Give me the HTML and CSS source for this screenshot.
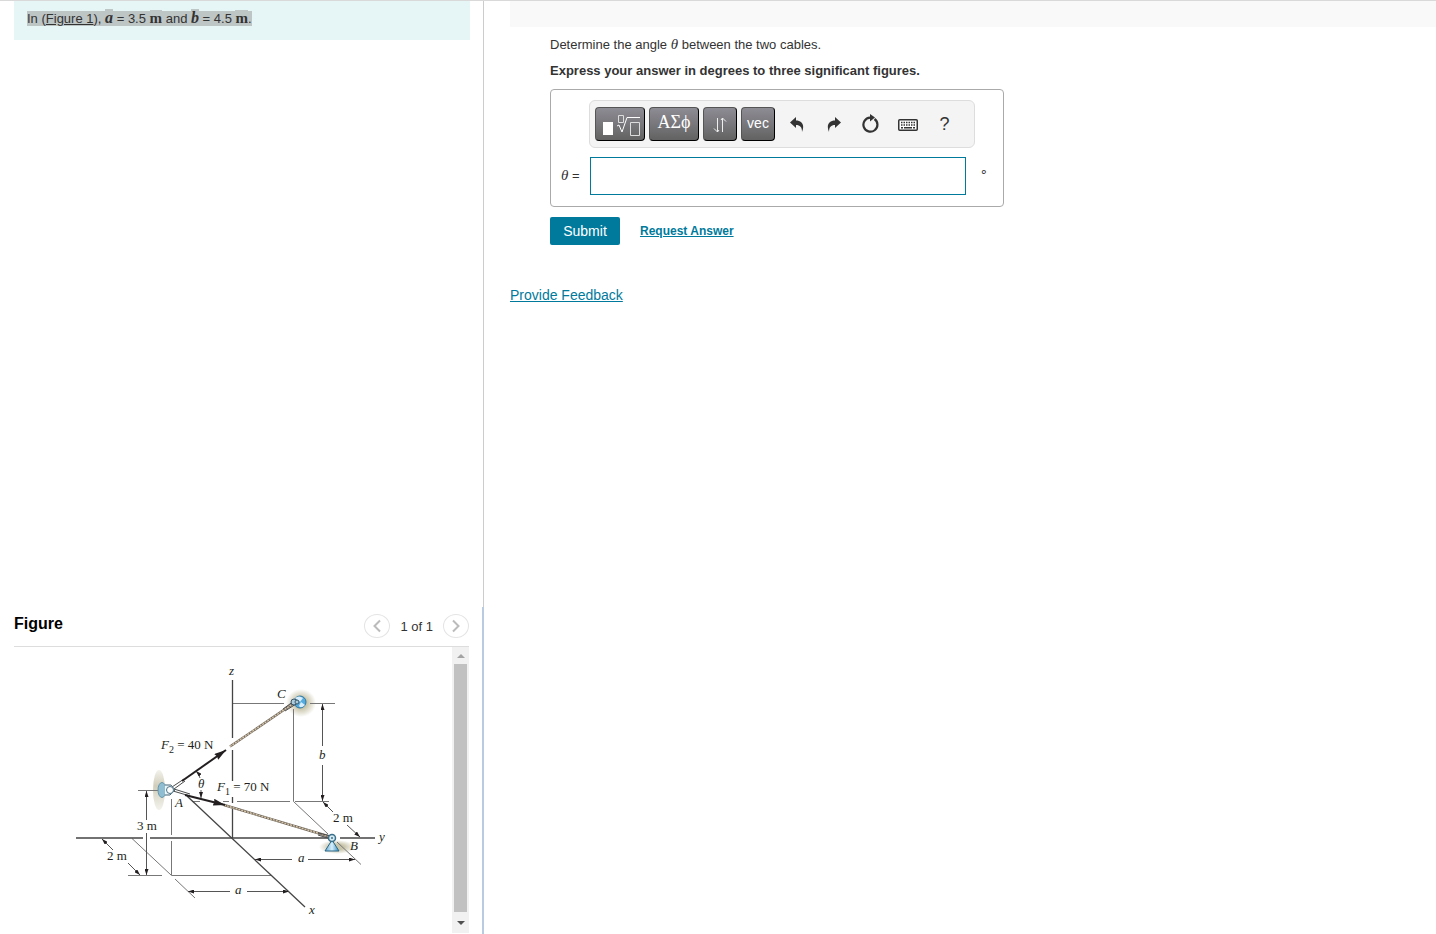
FILE: index.html
```html
<!DOCTYPE html>
<html lang="en">
<head>
  <meta charset="UTF-8" />
  <meta name="viewport" content="width=device-width, initial-scale=1" />
  <title>Angle between two cables</title>
  <link rel="stylesheet" href="styles.css">
</head>
<body>

<div class="page">
  <!-- Left side: problem text and figure -->
  <aside class="left">
    <div class="problem">
      <p><mark>In (<a href="#figure">Figure 1</a>), </mark><mark class="math"><i>a</i></mark><mark> = 3.5 </mark><mark class="math unit-m">m</mark><mark> and </mark><mark class="math"><i>b</i></mark><mark> = 4.5 </mark><mark class="math unit-m">m</mark><mark>.</mark></p>
    </div>

    <section class="figure" id="figure">
      <div class="figure-head">
        <h2>Figure</h2>
        <div class="pager">
          <button type="button" aria-label="Previous figure">
            <svg width="10" height="14" viewBox="0 0 10 14"><path d="M8 1.5L2.5 7L8 12.5" /></svg>
          </button>
          <span>1 of 1</span>
          <button type="button" aria-label="Next figure">
            <svg width="10" height="14" viewBox="0 0 10 14"><path d="M2 1.5L7.5 7L2 12.5" /></svg>
          </button>
        </div>
      </div>

      <div class="figure-body">
        <svg class="diagram" width="438" height="286" viewBox="14 647 438 286" role="img" aria-label="Two cables from A to B and C">
          <defs>
            <marker id="tip" viewBox="0 0 6 4" refX="6" refY="2" markerWidth="6" markerHeight="4" markerUnits="userSpaceOnUse" orient="auto">
              <path d="M0 0L6 2L0 4Z" fill="#231f20" />
            </marker>
            <marker id="force" viewBox="0 0 12 7" refX="12" refY="3.5" markerWidth="12" markerHeight="7" markerUnits="userSpaceOnUse" orient="auto">
              <path d="M0 0L12 3.5L0 7L1 3.5Z" fill="#231f20" />
            </marker>
            <radialGradient id="shade">
              <stop offset="0.4" stop-color="#c9c5ab" />
              <stop offset="1" stop-color="#c9c5ab" stop-opacity="0" />
            </radialGradient>
            <linearGradient id="wall" x2="0" y2="1">
              <stop offset="0" stop-color="#d6d3c0" stop-opacity="0.3" />
              <stop offset="0.4" stop-color="#d0cdb9" />
              <stop offset="1" stop-color="#d6d3c0" stop-opacity="0.3" />
            </linearGradient>
            <linearGradient id="cone">
              <stop offset="0" stop-color="#5fa9d3" />
              <stop offset="0.5" stop-color="#d9effa" />
              <stop offset="1" stop-color="#2b8cc4" />
            </linearGradient>
          </defs>

          <!-- shading behind the supports -->
          <ellipse cx="159" cy="790" rx="6" ry="20" fill="url(#wall)" />
          <ellipse cx="301" cy="703" rx="15" ry="14" fill="url(#shade)" />
          <ellipse cx="337" cy="847" rx="18" ry="7" fill="url(#shade)" />

          <!-- construction lines -->
          <g class="thin">
            <path d="M232.500 703.500H284M310 703.500H335" />
            <path d="M293.500 709V801.500L328 834M337 842L361 864.500" />
            <path d="M192 801.500H200M223 801.500H229M237 801.500H290M295 801.500H329" />
            <path d="M138 790.500H160M171.500 799V835M171.500 841V875.500H271M128 875.500H162" />
            <path d="M132 838.500L171 875M175 879L195 898" />
          </g>
          <g class="axis">
            <path d="M232.500 680V738M232.500 750V781M232.500 797V803M232.500 809V838" />
            <path d="M76 838H143M150 838H328M340 838H375" />
            <path d="M187 796L305 907" />
          </g>

          <!-- dimensions -->
          <g class="dim">
            <path d="M322.500 746V704" /><path d="M322.500 765V801" />
            <path d="M146.500 820V791" /><path d="M146.500 833V875" />
            <path d="M113 850L102 839" /><path d="M128 863L140 875" />
            <path d="M333 812L323 802" /><path d="M347 825L360 837" />
            <path d="M292 859.500H255" /><path d="M308 859.500H355" />
            <path d="M230 891.500H188" /><path d="M247 891.500H289" />
            <path d="M200 778Q199 774 196 771" /><path d="M201 790V798" />
          </g>

          <!-- cables -->
          <g class="rope">
            <path d="M230 746.500L294 703" />
            <path d="M224 805L331 837" />
          </g>
          <g class="twist">
            <path d="M230 746.500L294 703" />
            <path d="M224 805L331 837" />
          </g>
          <g class="loop">
            <path d="M283 709L294 701M285 711L296 704" />
            <path d="M172 787L184 779M174 789L185 781M173 791L190 796M174 789L190 794M318 833L331 836M318 835L331 839" />
          </g>
          <g class="arrow">
            <path d="M182 781L226 750" /><path d="M185 795L225 805" />
          </g>

          <!-- supports -->
          <ellipse cx="162" cy="790" rx="4" ry="7.500" fill="#8fbed3" stroke="#6597ac" />
          <path d="M165 785H171L175 790L170 795H165" fill="#eef6fa" stroke="#496675" />
          <circle cx="170" cy="790" r="3.500" fill="#fff" stroke="#4d7385" />
          <circle cx="300" cy="702" r="6" fill="#57acdf" stroke="#30779f" />
          <path d="M300 702L295 698Q299 695 303 698ZM301 702L305 705Q301 709 299 706Z" fill="#d8eefc" />
          <circle cx="294" cy="702" r="3" fill="#aacbdc" stroke="#385666" />
          <circle cx="297" cy="702" r="2" fill="#aacbdc" stroke="#385666" />
          <path d="M332 840L339 851H325Z" fill="url(#cone)" stroke="#2b6787" />
          <circle cx="332" cy="838" r="3.500" fill="#d5e9f1" stroke="#3a708b" stroke-width="1.500" />
          <circle cx="332" cy="838" r="1" fill="#3a708b" />

          <!-- labels -->
          <g class="label">
            <text x="229" y="675" class="it">z</text>
            <text x="277" y="698" class="it">C</text>
            <text x="319" y="759" class="it">b</text>
            <text x="161" y="749"><tspan class="it">F</tspan><tspan class="sub" dy="4">2</tspan><tspan dy="-4"> = 40 N</tspan></text>
            <text x="217" y="791"><tspan class="it">F</tspan><tspan class="sub" dy="4">1</tspan><tspan dy="-4"> = 70 N</tspan></text>
            <text x="198" y="788" class="it">θ</text>
            <text x="175" y="807" class="it">A</text>
            <text x="137" y="830">3 m</text>
            <text x="107" y="860">2 m</text>
            <text x="333" y="822">2 m</text>
            <text x="379" y="841" class="it">y</text>
            <text x="350" y="850" class="it">B</text>
            <text x="298" y="862" class="it">a</text>
            <text x="235" y="894" class="it">a</text>
            <text x="309" y="914" class="it">x</text>
          </g>
        </svg>

        <div class="scrollbar" aria-hidden="true">
          <span class="up"></span>
          <span class="thumb"></span>
          <span class="down"></span>
        </div>
      </div>
    </section>
  </aside>

  <!-- Right side: question and answer -->
  <main class="right">
    <div class="band"></div>
    <form class="question" onsubmit="return false">
      <p>Determine the angle <i class="math">θ</i> between the two cables.</p>
      <p><b>Express your answer in degrees to three significant figures.</b></p>

      <div class="answer">
        <div class="toolbar" role="toolbar" aria-label="Math tools">
          <button type="button" class="key wide" aria-label="Templates">
            <svg width="40" height="24" viewBox="0 0 40 24" fill="none" stroke="#fff">
              <path d="M3 9H13V22H3Z" fill="#fff" stroke="none" />
              <path d="M18.500 2.500H23.500V9.500H18.500Z" stroke="#ddd" />
              <path d="M17 13L19 12L22 19L27 4.500H40" />
              <path d="M30.500 9.500H39.500V22.500H30.500Z" stroke="#ddd" />
            </svg>
          </button>
          <button type="button" class="key wide greek">ΑΣϕ</button>
          <button type="button" class="key" aria-label="Subscript and superscript">
            <svg width="14" height="18" viewBox="0 0 14 18" fill="none" stroke="#eee">
              <path d="M4.500 2V16M1 12.500L4.500 16L6 14M9.500 16V2M8 4L9.500 2L13 5.500" />
            </svg>
          </button>
          <button type="button" class="key">vec</button>
          <div class="tools">
            <button type="button" aria-label="Undo">
              <svg width="14" height="15" viewBox="0 0 14 15"><path d="M0 5.500L6 0V3.500C12 3.500 15 8 12 15C12 10 10 8 6 8V11Z" /></svg>
            </button>
            <button type="button" aria-label="Redo">
              <svg width="14" height="15" viewBox="0 0 14 15"><path d="M14 5.500L8 0V3.500C2 3.500 -1 8 2 15C2 10 4 8 8 8V11Z" /></svg>
            </button>
            <button type="button" aria-label="Reset">
              <svg width="18" height="20" viewBox="0 0 18 20"><path d="M12.500 5A7 7 0 1 1 8 3.700" fill="none" stroke="#333" stroke-width="2.200" /><path d="M8 0L13 3.500L8 7.500Z" /></svg>
            </button>
            <button type="button" aria-label="Keyboard">
              <svg width="20" height="14" viewBox="0 -2 20 14">
                <rect x="0.750" y="0.750" width="18.500" height="10.500" rx="1" fill="#fff" stroke="#333" stroke-width="1.500" />
                <path d="M3 3.500H17M3 6H17" stroke="#333" stroke-width="1.500" stroke-dasharray="1.500 1" />
                <path d="M3 8.800H5M6 8.800H14M15 8.800H17" stroke="#333" stroke-width="1.500" />
              </svg>
            </button>
            <button type="button" aria-label="Help">?</button>
          </div>
        </div>
        <div class="entry">
          <label for="theta"><i class="math">θ</i> =</label>
          <input type="text" id="theta" autocomplete="off" />
          <span class="unit">∘</span>
        </div>
      </div>

      <div class="actions">
        <button type="submit" class="submit">Submit</button>
        <a href="#">Request Answer</a>
      </div>
    </form>
    <a class="feedback" href="#">Provide Feedback</a>
  </main>
</div>

</body>
</html>
```

FILE: styles.css
```css
* { box-sizing: border-box; }
body {
  margin: 0; background: #fff; color: #333;
  font-family: "Liberation Sans", Arial, sans-serif; font-size: 13px; line-height: 16px;
}
p, h2 { margin: 0; }
button { font-family: inherit; padding: 0; cursor: pointer; }
a { color: #007a9c; }
.math { font-family: "Liberation Serif", serif; font-size: 15px; line-height: 16px; }
.page {
  display: flex; min-height: 100vh; border-top: 1px solid #d9d9d9;
}

/* Left side */
.left {
  flex: 0 0 484px; display: flex; flex-direction: column; justify-content: space-between;
  border-right: 1px solid #ccc;
}
.problem {
  margin: 0 13px 0 14px; padding: 9px 13px 14px; background: #e6f6f6;
}
.problem p { white-space: pre-wrap; height: 16px; }
.problem mark { background: #bdc5c5; color: #333; }
.problem .math { font-size: 16px; font-weight: bold; }
.problem .unit-m { font-size: 15px; }
.problem a { color: #333; }
.figure {
  margin-right: -1px; padding: 0 13px 0 14px; border-right: 2px solid #b8cbe0;
}
.figure-head {
  display: flex; justify-content: space-between; align-items: center;
  height: 40px; border-bottom: 1px solid #ddd;
}
.figure-head h2 { font-size: 16px; line-height: 20px; color: #000; padding-bottom: 6px; }
.pager { display: flex; align-items: center; gap: 10px; padding-bottom: 2px; }
.pager span { padding-top: 3px; }
.pager button {
  width: 26px; height: 24px; border: 1px solid #e4e4e4; border-radius: 50%; background: #fff;
  display: flex; align-items: center; justify-content: center;
}
.pager path { fill: none; stroke: #bbb; stroke-width: 2; }
.figure-body { display: flex; justify-content: space-between; padding-bottom: 1px; }

.scrollbar {
  width: 17px; background: #f1f1f1; display: flex; flex-direction: column; align-items: center;
}
.scrollbar .thumb { flex: 1; width: 13px; background: #c1c1c1; }
.up, .down { border: 4px solid transparent; }
.up { margin: 3px 0 6px; border-bottom-color: #a3a3a3; }
.down { margin: 9px 0 4px; border-top-color: #505050; }

/* Diagram */
.diagram { display: block; }
.thin path { fill: none; stroke: #777; stroke-width: 1; }
.axis path { fill: none; stroke: #444; stroke-width: 1.3; }
.dim path { fill: none; stroke: #555; stroke-width: 1; marker-end: url(#tip); }
.rope path { stroke: #71685c; stroke-width: 2.4; }
.twist path { stroke: #d6c6ac; stroke-width: 1.4; stroke-dasharray: 2 1; }
.loop path { stroke: #4b4b4b; stroke-width: 1; }
.arrow path { stroke: #231f20; stroke-width: 2; marker-end: url(#force); }
.label text {
  font-family: "Liberation Serif", serif; font-size: 13px; fill: #231f20;
}
.label .it { font-style: italic; }
.label .sub { font-size: 10px; }

/* Right side */
.right { flex: 1; padding-left: 26px; }
.band { height: 26px; background: #f9f9f9; }
.question { padding: 9px 20px 0 40px; }
.question p { margin-bottom: 10px; }
.answer {
  max-width: 454px; padding: 10px 28px 11px 10px;
  border: 1px solid #aaa; border-radius: 4px;
}
.toolbar {
  display: flex; align-items: center; gap: 4px;
  margin-left: 28px; height: 48px; padding: 0 5px;
  background: #f4f4f4; border: 1px solid #ddd; border-radius: 6px;
}
.key {
  width: 34px; height: 34px; padding-bottom: 3px; color: #fff; font-size: 14px;
  display: flex; align-items: center; justify-content: center;
  background: linear-gradient(#8e8c94, #626262);
  border: 1px solid #000; border-top-color: #555; border-left-color: #555; border-radius: 4px;
}
.key svg { position: relative; top: 2px; }
.key.wide { width: 50px; }
.greek { font-family: "Liberation Serif", serif; font-size: 18px; }
.tools { display: flex; margin-left: -1px; }
.tools button {
  width: 37px; height: 34px; border: 0; background: none; color: #333; font-size: 18px;
  display: flex; align-items: center; justify-content: center;
}
.tools svg { fill: #333; }
.entry { display: flex; align-items: center; margin: 9px -18px 0 0; }
.entry label { width: 29px; padding-bottom: 2px; color: #333; }
.entry input {
  flex: 1; min-width: 0; height: 38px; border: 1px solid #007a9c; background: #fff;
  font-size: 16px; padding: 0 8px;
}
.unit { width: 27px; text-align: right; padding: 0 5px 8px 0; font-family: "DejaVu Sans", sans-serif; }
.actions { display: flex; align-items: center; gap: 20px; margin-top: 10px; }
.submit {
  width: 70px; height: 28px; border: 0; border-radius: 2px;
  background: #007a9c; color: #fff; font-size: 14px;
}
.actions a { font-size: 12px; font-weight: bold; }
.feedback { display: inline-block; margin-top: 42px; font-size: 14px; }
```
